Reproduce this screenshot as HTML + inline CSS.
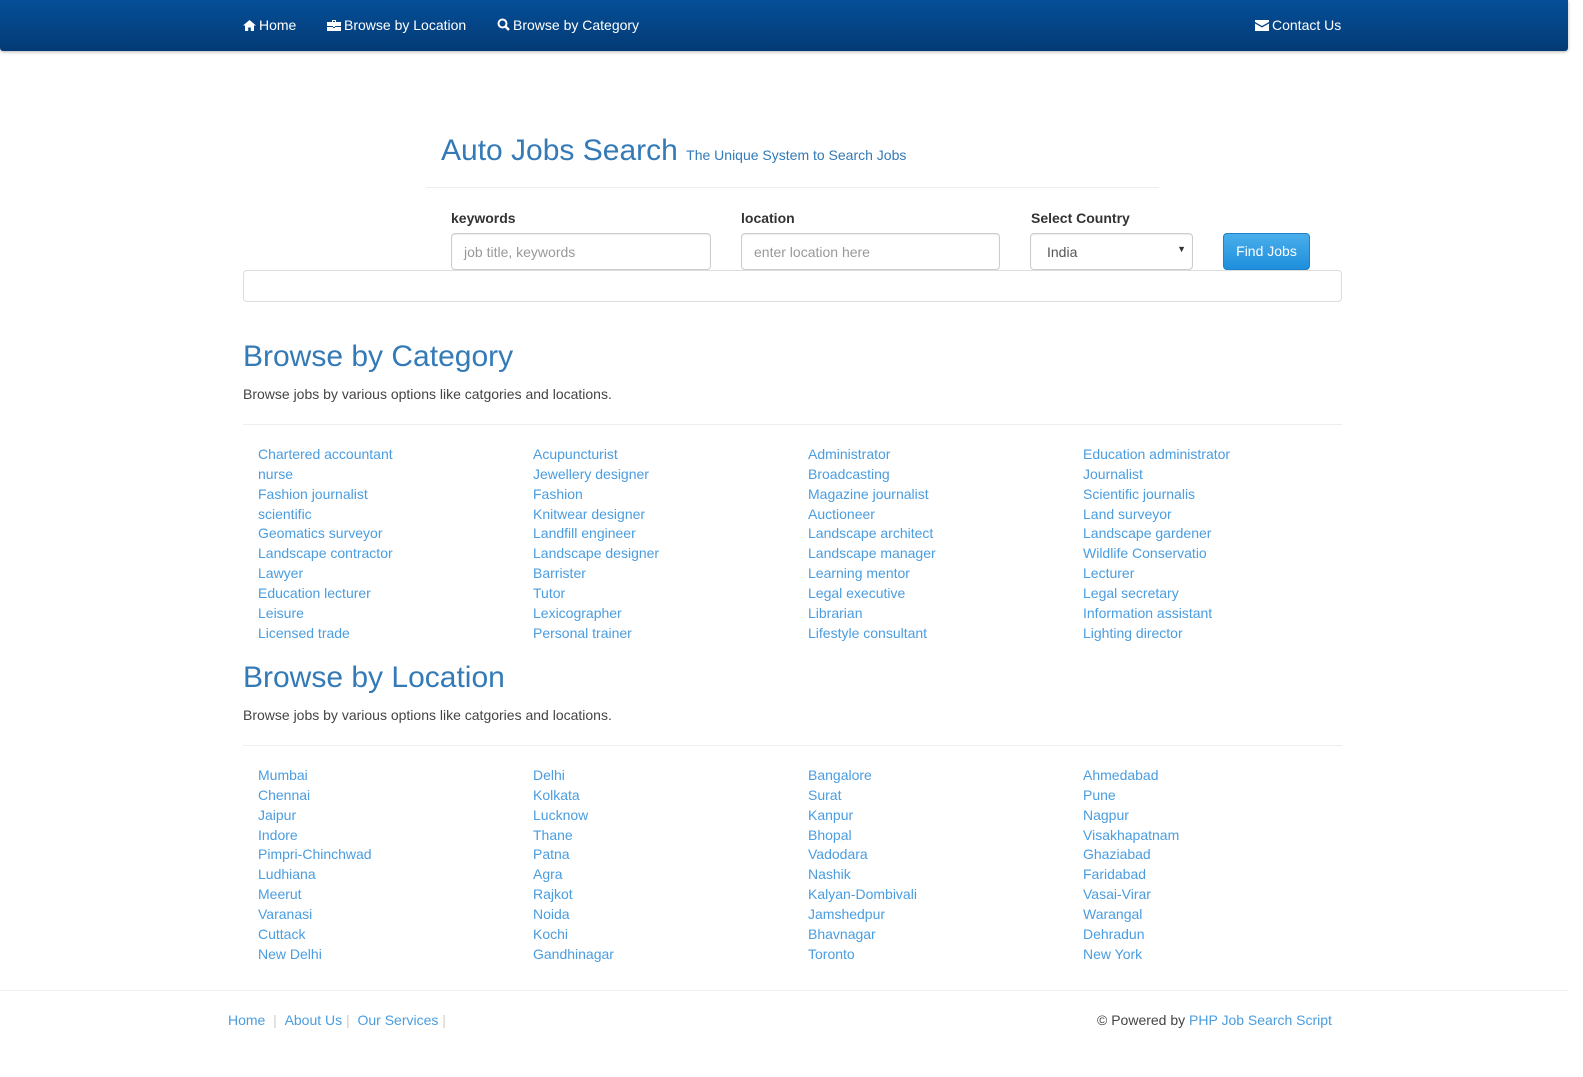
<!DOCTYPE html>
<html><head><meta charset="utf-8"><style>
*{box-sizing:border-box;margin:0;padding:0}
body{width:1583px;height:1077px;position:relative;background:#fff;font-family:"Liberation Sans",Arial,sans-serif;font-size:14px;color:#333;overflow:hidden}
.nav{position:absolute;left:0;top:0;width:1568px;height:51px;background:linear-gradient(#054f98,#033a75);border-radius:0 0 3px 3px;box-shadow:0 1px 3px rgba(0,0,0,.3)}
.nav a{position:absolute;top:17px;color:#fff;font-size:14px;text-decoration:none;white-space:nowrap}
.nav svg{vertical-align:-1px;margin-right:3px}
.a{position:absolute;white-space:nowrap}
a{color:#4a9de0;text-decoration:none}
.h{color:#337ab7;font-size:30px;position:absolute;left:243px}
.p{position:absolute;left:243px;font-size:14px;color:#444}
.hr{position:absolute;height:1px;background:#eee}
.col{position:absolute;line-height:19.85px;font-size:14px}
.lbl{position:absolute;top:210px;font-weight:bold;font-size:14px;color:#333}
.in{position:absolute;top:233px;height:37px;border:1px solid #ccc;border-radius:4px;color:#999;padding:10px 12px;font-size:14px;box-shadow:inset 0 1px 1px rgba(0,0,0,.075)}
</style></head><body>
<div class="nav">
<a style="left:243px"><svg width="13" height="11" viewBox="0 0 13 11"><path d="M6.5 0L0 5.5h2V11h3.2V7.5h2.6V11H11V5.5h2z" fill="#fff"/></svg>Home</a>
<a style="left:327px"><svg width="14" height="11" viewBox="0 0 14 11"><path d="M5 0h4v2h5v4H8v1H6V6H0V2h5zM6 1v1h2V1zM0 7h6v1h2V7h6v4H0z" fill="#fff"/></svg>Browse by Location</a>
<a style="left:497px"><svg width="13" height="13" viewBox="0 0 13 13"><circle cx="5.5" cy="5.5" r="4" fill="none" stroke="#fff" stroke-width="2"/><path d="M8.5 8.5l3.5 3.5" stroke="#fff" stroke-width="2.5"/></svg>Browse by Category</a>
<a style="left:1255px"><svg width="14" height="11" viewBox="0 0 14 11"><path d="M0 0h14v2L7 6 0 2zM0 3.5l7 4 7-4V11H0z" fill="#fff"/></svg>Contact Us</a>
</div>
<div class="a" style="left:441px;top:134px;font-size:30px;color:#337ab7">Auto Jobs Search <span style="font-size:14px">The Unique System to Search Jobs</span></div>
<div class="hr" style="left:426px;top:187px;width:733px"></div>
<div class="lbl" style="left:451px">keywords</div>
<div class="lbl" style="left:741px">location</div>
<div class="lbl" style="left:1031px">Select Country</div>
<div class="in" style="left:451px;width:260px">job title, keywords</div>
<div class="in" style="left:741px;width:259px">enter location here</div>
<div class="in" style="left:1030px;width:163px;color:#555;padding-left:16px">India<span style="position:absolute;right:6px;top:10px;font-size:9px;color:#333">▼</span></div>
<div class="a" style="left:1223px;top:233px;width:87px;height:37px;background:linear-gradient(#4aaeea,#1e8fdd);border:1px solid #1d82c9;border-radius:4px;color:#fff;text-align:center;line-height:35px">Find Jobs</div>
<div class="a" style="left:243px;top:270px;width:1099px;height:32px;border:1px solid #ddd;border-radius:4px"></div>
<div class="h" style="top:340px">Browse by Category</div>
<div class="p" style="top:386px">Browse jobs by various options like catgories and locations.</div>
<div class="hr" style="left:243px;top:424px;width:1099px"></div>
<div class="col" style="left:258px;top:445px"><a>Chartered accountant</a><br><a>nurse</a><br><a>Fashion journalist</a><br><a>scientific</a><br><a>Geomatics surveyor</a><br><a>Landscape contractor</a><br><a>Lawyer</a><br><a>Education lecturer</a><br><a>Leisure</a><br><a>Licensed trade</a></div>
<div class="col" style="left:533px;top:445px"><a>Acupuncturist</a><br><a>Jewellery designer</a><br><a>Fashion</a><br><a>Knitwear designer</a><br><a>Landfill engineer</a><br><a>Landscape designer</a><br><a>Barrister</a><br><a>Tutor</a><br><a>Lexicographer</a><br><a>Personal trainer</a></div>
<div class="col" style="left:808px;top:445px"><a>Administrator</a><br><a>Broadcasting</a><br><a>Magazine journalist</a><br><a>Auctioneer</a><br><a>Landscape architect</a><br><a>Landscape manager</a><br><a>Learning mentor</a><br><a>Legal executive</a><br><a>Librarian</a><br><a>Lifestyle consultant</a></div>
<div class="col" style="left:1083px;top:445px"><a>Education administrator</a><br><a>Journalist</a><br><a>Scientific journalis</a><br><a>Land surveyor</a><br><a>Landscape gardener</a><br><a>Wildlife Conservatio</a><br><a>Lecturer</a><br><a>Legal secretary</a><br><a>Information assistant</a><br><a>Lighting director</a></div>
<div class="h" style="top:661px">Browse by Location</div>
<div class="p" style="top:707px">Browse jobs by various options like catgories and locations.</div>
<div class="hr" style="left:243px;top:745px;width:1099px"></div>
<div class="col" style="left:258px;top:766px"><a>Mumbai</a><br><a>Chennai</a><br><a>Jaipur</a><br><a>Indore</a><br><a>Pimpri-Chinchwad</a><br><a>Ludhiana</a><br><a>Meerut</a><br><a>Varanasi</a><br><a>Cuttack</a><br><a>New Delhi</a></div>
<div class="col" style="left:533px;top:766px"><a>Delhi</a><br><a>Kolkata</a><br><a>Lucknow</a><br><a>Thane</a><br><a>Patna</a><br><a>Agra</a><br><a>Rajkot</a><br><a>Noida</a><br><a>Kochi</a><br><a>Gandhinagar</a></div>
<div class="col" style="left:808px;top:766px"><a>Bangalore</a><br><a>Surat</a><br><a>Kanpur</a><br><a>Bhopal</a><br><a>Vadodara</a><br><a>Nashik</a><br><a>Kalyan-Dombivali</a><br><a>Jamshedpur</a><br><a>Bhavnagar</a><br><a>Toronto</a></div>
<div class="col" style="left:1083px;top:766px"><a>Ahmedabad</a><br><a>Pune</a><br><a>Nagpur</a><br><a>Visakhapatnam</a><br><a>Ghaziabad</a><br><a>Faridabad</a><br><a>Vasai-Virar</a><br><a>Warangal</a><br><a>Dehradun</a><br><a>New York</a></div>
<div class="hr" style="left:0;top:990px;width:1568px"></div>
<div class="a" style="left:228px;top:1012px;color:#ccc"><a>Home</a> &nbsp;| &nbsp;<a>About Us</a> | &nbsp;<a>Our Services</a> |</div>
<div class="a" style="left:1097px;top:1012px;color:#444">© Powered by <a>PHP Job Search Script</a></div>
</body></html>
